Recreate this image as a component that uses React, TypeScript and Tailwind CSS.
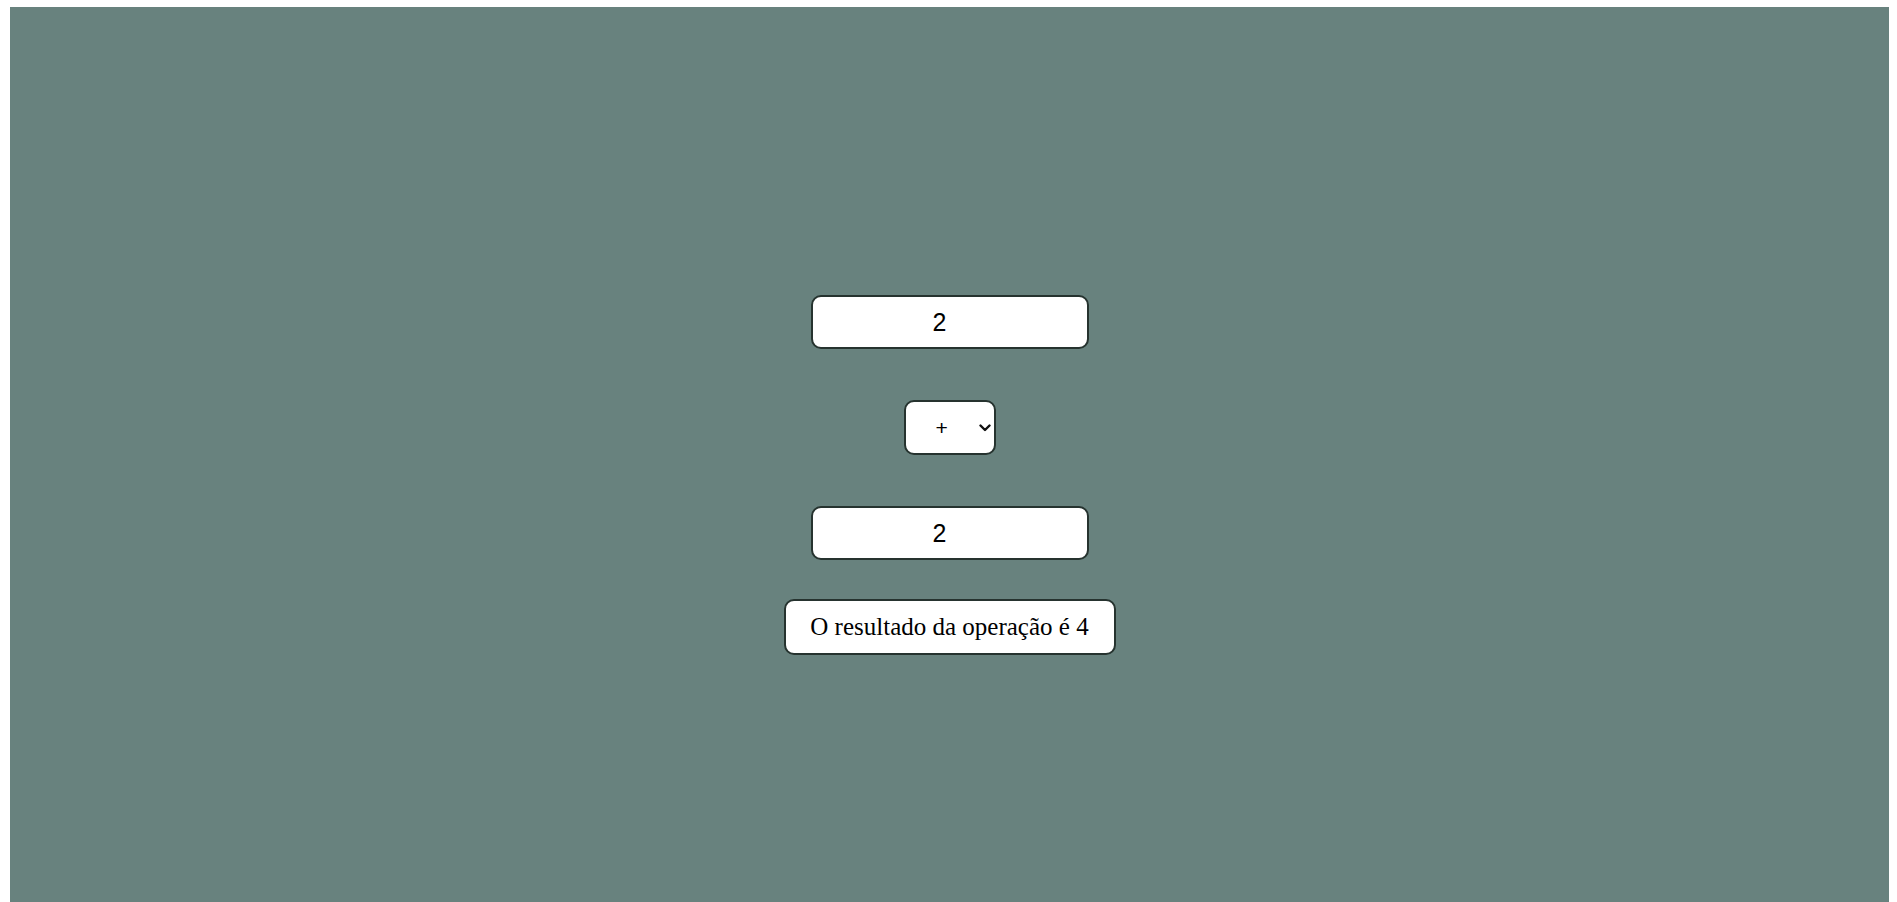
import React from "react";

export default function App() {
  return (
    <div className="w-[1897px] h-[902px] bg-white overflow-hidden pt-[7px] pl-[10px] pr-[8px]">
      <div className="h-[895px] bg-[#68827e] flex flex-col items-center pt-[288px]">
        <input
          type="text"
          readOnly
          value="2"
          className="w-[278px] h-[54px] bg-white border-2 border-[#26332f] rounded-[10px] text-center text-[25px] text-black pl-0 pr-[20px] outline-none font-['Liberation_Sans',Arial,sans-serif]"
        />
        <div className="relative mt-[51px] w-[92px] h-[55px] bg-white border-2 border-[#26332f] rounded-[10px] flex items-center pl-[30px] text-[21px] text-black font-['Liberation_Sans',Arial,sans-serif]">
          <span>+</span>
          <svg
            className="absolute left-[73px] top-[22px]"
            width="12"
            height="8"
            viewBox="0 0 12 8"
            fill="none"
          >
            <polyline
              points="1.5,1.5 6,6 10.5,1.5"
              stroke="#111"
              strokeWidth="2.4"
              strokeLinecap="round"
              strokeLinejoin="round"
            />
          </svg>
        </div>
        <input
          type="text"
          readOnly
          value="2"
          className="mt-[51px] w-[278px] h-[54px] bg-white border-2 border-[#26332f] rounded-[10px] text-center text-[25px] text-black pl-0 pr-[20px] outline-none font-['Liberation_Sans',Arial,sans-serif]"
        />
        <div className="mt-[39px] h-[56px] w-[332px] bg-white border-2 border-[#26332f] rounded-[10px] flex items-center justify-center text-[25px] text-black whitespace-nowrap font-['Liberation_Serif','Times_New_Roman',serif]">
          O resultado da operação é 4
        </div>
      </div>
    </div>
  );
}
